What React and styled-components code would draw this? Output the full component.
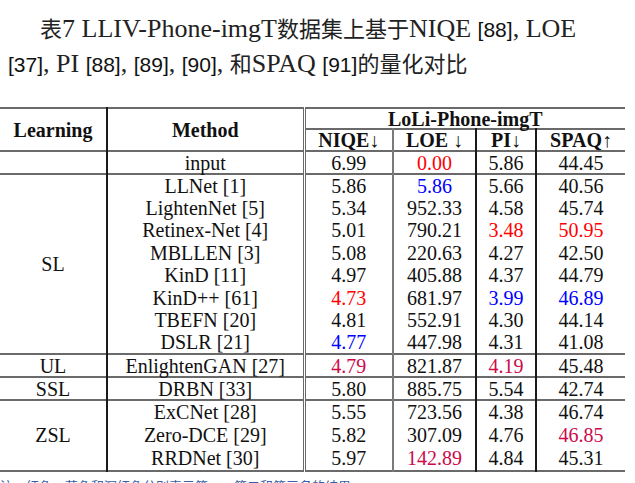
import React from 'react';
import styled, { createGlobalStyle } from 'styled-components';

const GlobalStyle = createGlobalStyle`
    html, body {
        margin: 0;
        padding: 0;
        background: #ffffff;
        overflow: hidden;
    }
`;

const Page = styled.div`
    width: 635px;
    height: 483px;
    overflow: hidden;
    font-family: "Liberation Serif", "Noto Sans CJK SC", serif;
    color: #111;
`;

const Caption = styled.p`
    margin: 0;
    padding: 11px 36px 0 8px;
    height: 96px;
    box-sizing: border-box;
    font-size: 26px;
    line-height: 32px;
    text-indent: 32px;
    color: #222;
`;

const Cjk = styled.span`
    font-family: "Noto Sans CJK SC", sans-serif;
    font-size: 22px;
`;

const Ref = styled.span`
    font-family: "Liberation Sans", sans-serif;
    font-size: 21px;
    color: #111;
`;

const Table = styled.table`
    border-collapse: collapse;
    table-layout: fixed;
    width: 625px;
    margin-top: 11px;
    font-family: "Liberation Serif", serif;
    font-size: 20px;
    border-top: 2px solid #6a6a6a;
    border-bottom: 2px solid #6a6a6a;
`;

const lineFor = (edge) => {
    if (edge === 'black') return '2px solid #1a1a1a';
    if (edge === 'thick') return '3px double #6a6a6a';
    if (edge === 'gray') return '2px solid #7a7a7a';
    return 'none';
};

const Row = styled.tr`
    height: ${(p) => p.$h || 22}px;
`;

const Cell = styled.td`
    padding: 0;
    line-height: 18px;
    font-family: "Liberation Serif", "Times New Roman", serif;
    font-size: 20px;
    text-align: center;
    vertical-align: middle;
    white-space: nowrap;
    font-weight: ${(p) => (p.$bold ? 700 : 400)};
    color: ${(p) => p.$color || '#111'};
    border-top: ${(p) => (p.$top ? '2px solid #6a6a6a' : 'none')};
    border-right: ${(p) => lineFor(p.$right)};
`;

const Foot = styled.div`
    margin-top: 6px;
    font-family: "Noto Sans CJK SC", sans-serif;
    font-size: 13px;
    line-height: 16px;
    color: #3a5fa8;
    white-space: nowrap;
`;

const RED = '#ff0000';
const BLUE = '#0000ff';
const CRIMSON = '#cc0a4a';

const groups = [
    {
        name: '',
        h: 23,
        rows: [['input', ['6.99'], ['0.00', RED], ['5.86'], ['44.45']]],
    },
    {
        name: 'SL',
        h: 22.5,
        rows: [
            ['LLNet [1]', ['5.86'], ['5.86', BLUE], ['5.66'], ['40.56']],
            ['LightenNet [5]', ['5.34'], ['952.33'], ['4.58'], ['45.74']],
            ['Retinex-Net [4]', ['5.01'], ['790.21'], ['3.48', RED], ['50.95', RED]],
            ['MBLLEN [3]', ['5.08'], ['220.63'], ['4.27'], ['42.50']],
            ['KinD [11]', ['4.97'], ['405.88'], ['4.37'], ['44.79']],
            ['KinD++ [61]', ['4.73', RED], ['681.97'], ['3.99', BLUE], ['46.89', BLUE]],
            ['TBEFN [20]', ['4.81'], ['552.91'], ['4.30'], ['44.14']],
            ['DSLR [21]', ['4.77', BLUE], ['447.98'], ['4.31'], ['41.08']],
        ],
    },
    {
        name: 'UL',
        h: 23,
        rows: [['EnlightenGAN [27]', ['4.79', CRIMSON], ['821.87'], ['4.19', CRIMSON], ['45.48']]],
    },
    {
        name: 'SSL',
        h: 23,
        rows: [['DRBN [33]', ['5.80'], ['885.75'], ['5.54'], ['42.74']]],
    },
    {
        name: 'ZSL',
        h: 23.5,
        rows: [
            ['ExCNet [28]', ['5.55'], ['723.56'], ['4.38'], ['46.74']],
            ['Zero-DCE [29]', ['5.82'], ['307.09'], ['4.76'], ['46.85', CRIMSON]],
            ['RRDNet [30]', ['5.97'], ['142.89', CRIMSON], ['4.84'], ['45.31']],
        ],
    },
];

const valueEdges = ['gray', 'black', 'black', 'none'];

function App() {
    return (
        <Page>
            <GlobalStyle />
            <Caption>
                <Cjk>表</Cjk>7 LLIV-Phone-imgT<Cjk>数据集上基于</Cjk>NIQE <Ref>[88]</Ref>, LOE{' '}
                <Ref>[37]</Ref>, PI <Ref>[88]</Ref>, <Ref>[89]</Ref>, <Ref>[90]</Ref>, <Cjk>和</Cjk>SPAQ{' '}
                <Ref>[91]</Ref><Cjk>的量化对比</Cjk>
            </Caption>
            <Table>
                <colgroup>
                    <col style={{ width: 107 }} />
                    <col style={{ width: 197 }} />
                    <col style={{ width: 89 }} />
                    <col style={{ width: 83 }} />
                    <col style={{ width: 60 }} />
                    <col style={{ width: 89 }} />
                </colgroup>
                <thead>
                    <Row $h={21}>
                        <Cell as="th" rowSpan={2} $bold $right="black">Learning</Cell>
                        <Cell as="th" rowSpan={2} $bold $right="thick">Method</Cell>
                        <Cell as="th" colSpan={4} $bold>LoLi-Phone-imgT</Cell>
                    </Row>
                    <Row $h={22}>
                        <Cell as="th" $bold $top $right="gray">NIQE↓</Cell>
                        <Cell as="th" $bold $top $right="black">LOE ↓</Cell>
                        <Cell as="th" $bold $top $right="black">PI↓</Cell>
                        <Cell as="th" $bold $top>SPAQ↑</Cell>
                    </Row>
                </thead>
                <tbody>
                    {groups.map((g) =>
                        g.rows.map(([method, ...vals], i) => (
                            <Row key={method} $h={g.h}>
                                {i === 0 && (
                                    <Cell rowSpan={g.rows.length} $top $right="black">{g.name}</Cell>
                                )}
                                <Cell $top={i === 0} $right="thick">{method}</Cell>
                                {vals.map(([v, color], j) => (
                                    <Cell key={j} $top={i === 0} $right={valueEdges[j]} $color={color}>
                                        {v}
                                    </Cell>
                                ))}
                            </Row>
                        ))
                    )}
                </tbody>
            </Table>
            <Foot>注：红色、蓝色和深红色分别表示第一、第二和第三名的结果。</Foot>
        </Page>
    );
}

export default App;
